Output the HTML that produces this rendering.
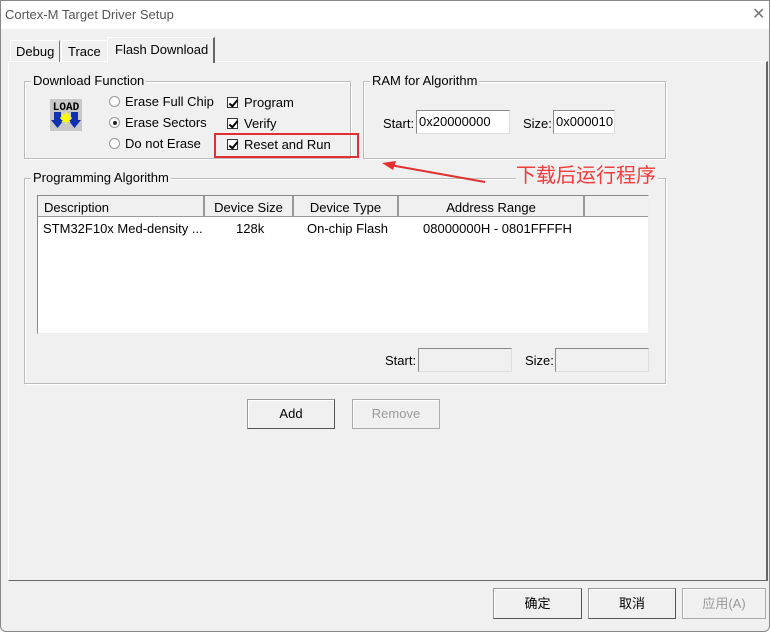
<!DOCTYPE html>
<html><head><meta charset="utf-8"><style>
*{margin:0;padding:0;box-sizing:border-box}
body{width:771px;height:633px;background:#fff;font-family:"Liberation Sans","Noto Sans CJK SC",sans-serif;font-size:13px;color:#000;position:relative;overflow:hidden}
.a{position:absolute;white-space:nowrap}
.win{position:absolute;left:0;top:0;width:770px;height:632px;border:1px solid #888;border-radius:0 0 6px 6px;background:#f0f0f0}
.title{position:absolute;left:1px;top:1px;width:768px;height:28px;background:#fff}
.grp{position:absolute;border:1px solid #bbb;box-shadow:inset 1px 1px 0 #fff,1px 1px 0 #fff}
.lbl{position:absolute;background:#f0f0f0;padding:0 2px;top:-8px;left:6px;line-height:14px}
.chk{position:absolute;width:11px;height:11px;border:1px solid #333;background:#fff}
.chk:after{content:"";position:absolute;left:3px;top:0px;width:3px;height:7px;border:solid #000;border-width:0 2px 2px 0;transform:rotate(40deg)}
.rad{position:absolute;width:11px;height:11px;border-radius:50%;border:1px solid #999;background:#fff}
.dot:after{content:"";position:absolute;left:3px;top:3px;width:4px;height:4px;border-radius:50%;background:#222}
.edit{position:absolute;height:24px;border:1px solid #888;border-right-color:#ddd;border-bottom-color:#ddd;background:#fff;padding:3px 2px;overflow:hidden}
.btn{position:absolute;border:1px solid #999;border-right-color:#555;border-bottom-color:#555;background:#f0f0f0;box-shadow:inset 1px 1px 0 #fff;text-align:center}
</style></head><body>
<div class="win"></div>
<div class="title"></div>
<div class="a" style="left:5px;top:7px;color:#555">Cortex-M Target Driver Setup</div>
<div class="a" style="left:752px;top:4px;color:#777;font-size:16px">✕</div>
<div class="a" style="left:8px;top:61px;width:760px;height:520px;border:1px solid #fff;border-right:2px solid #666;border-bottom:1px solid #666"></div>
<div class="a" style="left:10px;top:40px;width:50px;height:22px;border:1px solid #fff;border-right:1px solid #777;border-bottom:none;padding:3px 0 0 5px">Debug</div>
<div class="a" style="left:61px;top:40px;width:45px;height:22px;border:1px solid #fff;border-right:none;padding:3px 0 0 6px">Trace</div>
<div class="a" style="left:107px;top:37px;width:108px;height:26px;border:1px solid #fff;border-right:2px solid #666;border-bottom:none;background:#f0f0f0;padding:4px 0 0 7px">Flash Download</div>
<div class="grp" style="left:24px;top:81px;width:327px;height:78px"><div class="lbl">Download Function</div></div>
<svg class="a" style="left:50px;top:99px" width="32" height="32" viewBox="0 0 32 32">
<rect x="0" y="0" width="32" height="32" fill="#c8c8c8"/>
<text x="16" y="11" font-family="Liberation Mono" font-weight="bold" font-size="11" text-anchor="middle" fill="#000">LOAD</text>
<path d="M4 13h7v8h3l-6.5 8L1 21h3z M21 13h7v8h3l-6.5 8L18 21h3z" fill="#1030b0"/>
<circle cx="16" cy="19" r="4" fill="#ffff00"/><path d="M16 13v12M10 19h12M12 15l8 8M20 15l-8 8" stroke="#ffff00" stroke-width="1.3"/>
</svg>
<div class="rad" style="left:109px;top:96px"></div><div class="a" style="left:125px;top:94px">Erase Full Chip</div>
<div class="rad dot" style="left:109px;top:117px"></div><div class="a" style="left:125px;top:115px">Erase Sectors</div>
<div class="rad" style="left:109px;top:138px"></div><div class="a" style="left:125px;top:136px">Do not Erase</div>
<div class="chk" style="left:227px;top:97px"></div><div class="a" style="left:244px;top:95px">Program</div>
<div class="chk" style="left:227px;top:118px"></div><div class="a" style="left:244px;top:116px">Verify</div>
<div class="chk" style="left:227px;top:139px"></div><div class="a" style="left:244px;top:137px">Reset and Run</div>
<div class="a" style="left:214px;top:133px;width:145px;height:25px;border:2px solid #e03030"></div>
<div class="grp" style="left:363px;top:81px;width:303px;height:78px"><div class="lbl">RAM for Algorithm</div></div>
<div class="a" style="left:383px;top:116px">Start:</div>
<div class="edit" style="left:416px;top:110px;width:94px">0x20000000</div>
<div class="a" style="left:523px;top:116px">Size:</div>
<div class="edit" style="left:553px;top:110px;width:62px">0x000010</div>
<div class="grp" style="left:24px;top:178px;width:642px;height:206px"><div class="lbl">Programming Algorithm</div></div>
<svg class="a" style="left:380px;top:160px" width="110" height="25"><path d="M105 22L10 5" stroke="#e03030" stroke-width="2"/><path d="M2 3L16 1L13 10z" fill="#e03030"/></svg>
<div class="a" style="left:516px;top:160px;font-size:20px;color:#f03c3c;font-family:'Noto Sans CJK SC',sans-serif;line-height:28px;height:28px;background:#f0f0f0;padding-right:2px">下载后运行程序</div>
<div class="a" style="left:37px;top:195px;width:612px;height:139px;border:1px solid #888;border-right-color:#eee;border-bottom-color:#eee;background:#fff"></div>
<div class="a" style="left:38px;top:196px;width:610px;height:21px;background:#f0f0f0;border-bottom:1px solid #999"></div>
<div class="a" style="left:38px;top:196px;width:167px;height:21px;border-right:2px solid #999;padding:4px 0 0 6px">Description</div>
<div class="a" style="left:205px;top:196px;width:89px;height:21px;border-right:2px solid #999;padding-top:4px;text-align:center">Device Size</div>
<div class="a" style="left:294px;top:196px;width:105px;height:21px;border-right:2px solid #999;padding-top:4px;text-align:center">Device Type</div>
<div class="a" style="left:399px;top:196px;width:186px;height:21px;border-right:2px solid #999;padding-top:4px;text-align:center">Address Range</div>
<div class="a" style="left:43px;top:221px">STM32F10x Med-density ...</div>
<div class="a" style="left:236px;top:221px">128k</div>
<div class="a" style="left:307px;top:221px">On-chip Flash</div>
<div class="a" style="left:423px;top:221px">08000000H - 0801FFFFH</div>
<div class="a" style="left:385px;top:353px">Start:</div>
<div class="edit" style="left:418px;top:348px;width:94px;background:#f0f0f0"></div>
<div class="a" style="left:525px;top:353px">Size:</div>
<div class="edit" style="left:555px;top:348px;width:94px;background:#f0f0f0"></div>
<div class="btn" style="left:247px;top:399px;width:88px;height:30px;line-height:27px">Add</div>
<div class="btn" style="left:352px;top:399px;width:88px;height:30px;line-height:27px;color:#999;border-color:#aaa">Remove</div>
<div class="btn" style="left:493px;top:588px;width:89px;height:31px;line-height:29px">确定</div>
<div class="btn" style="left:588px;top:588px;width:88px;height:31px;line-height:29px">取消</div>
<div class="btn" style="left:682px;top:588px;width:84px;height:31px;line-height:29px;color:#999;border-color:#aaa">应用(A)</div>
</body></html>
